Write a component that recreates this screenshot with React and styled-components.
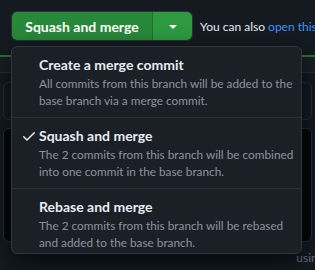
import React from "react";
import styled, { createGlobalStyle } from "styled-components";

const GlobalStyle = createGlobalStyle`
  html, body {
    margin: 0;
    padding: 0;
    background: #151a21;
    font-family: Lato, "Liberation Sans", sans-serif;
    -webkit-font-smoothing: antialiased;
  }
`;

const options = [
  {
    title: "Create a merge commit",
    text: "All commits from this branch will be added to the base branch via a merge commit.",
  },
  {
    title: "Squash and merge",
    text: "The 2 commits from this branch will be combined into one commit in the base branch.",
    selected: true,
  },
  {
    title: "Rebase and merge",
    text: "The 2 commits from this branch will be rebased and added to the base branch.",
  },
];

export default function App() {
  return (
    <Page>
      <GlobalStyle />
      <ActionRow>
        <ButtonGroup>
          <MainButton>Squash and merge</MainButton>
          <CaretButton>
            <svg width="16" height="16" viewBox="0 0 16 16" fill="#ffffff">
              <path d="m4.427 7.427 3.396 3.396a.25.25 0 0 0 .354 0l3.396-3.396A.25.25 0 0 0 11.396 7H4.604a.25.25 0 0 0-.177.427Z" />
            </svg>
          </CaretButton>
        </ButtonGroup>
        <Hint>
          You can also <a href="#">open this in GitHub Desktop</a>
        </Hint>
      </ActionRow>

      <Backdrop>
        <BackdropHeader />
        <BackdropBody>
          <GhostBox />
          <CodeBox />
          <GhostText>using</GhostText>
        </BackdropBody>
      </Backdrop>

      <Menu>
        {options.map((o) => (
          <MenuItem key={o.title}>
            <CheckSlot>
              {o.selected && (
                <svg width="16" height="16" viewBox="0 0 16 16" fill="#e6edf3">
                  <path d="M13.78 4.22a.75.75 0 0 1 0 1.06l-7.25 7.25a.75.75 0 0 1-1.06 0L2.22 9.28a.751.751 0 0 1 .018-1.042.751.751 0 0 1 1.042-.018L6 10.94l6.72-6.72a.75.75 0 0 1 1.06 0Z" />
                </svg>
              )}
            </CheckSlot>
            <ItemBody>
              <ItemTitle>{o.title}</ItemTitle>
              <ItemText>{o.text}</ItemText>
            </ItemBody>
          </MenuItem>
        ))}
      </Menu>
    </Page>
  );
}

const Page = styled.div`
  position: relative;
  width: 315px;
  height: 270px;
  overflow: hidden;
  padding-top: 11px;
  box-sizing: border-box;
`;

const ActionRow = styled.div`
  display: flex;
  align-items: center;
  gap: 7px;
  padding-left: 11px;
  white-space: nowrap;
`;

const ButtonGroup = styled.div`
  display: flex;
  flex-shrink: 0;
  height: 30px;
  border-radius: 6px;
  overflow: hidden;
  border: 1px solid rgba(240, 246, 252, 0.1);
  box-sizing: border-box;
`;

const MainButton = styled.button`
  width: 141px;
  flex-shrink: 0;
  border: 0;
  border-right: 1px solid rgba(0, 0, 0, 0.18);
  background: #28883a;
  color: #ffffff;
  font-family: Lato, "Liberation Sans", sans-serif;
  font-weight: 700;
  font-size: 14px;
  padding: 0;
`;

const CaretButton = styled.button`
  width: 39px;
  flex-shrink: 0;
  border: 0;
  background: #2e9a40;
  display: flex;
  align-items: center;
  justify-content: center;
  padding: 0;
`;

const Hint = styled.span`
  font-size: 12px;
  color: #e6edf3;

  a {
    color: #4493f8;
    text-decoration: none;
  }
`;

const Backdrop = styled.div`
  margin-top: 14px;
  border-top: 2px solid #2a7a35;
`;

const BackdropHeader = styled.div`
  height: 15px;
  background: #1a1f26;
  border-bottom: 1px solid #2a3038;
`;

const BackdropBody = styled.div`
  display: flex;
  flex-direction: column;
  gap: 8px;
  padding: 9px 3px 0 3px;
`;

const GhostBox = styled.div`
  height: 36px;
  border: 1px solid #2a3038;
  border-radius: 6px;
`;

const CodeBox = styled.div`
  height: 112px;
  background: #05070a;
  border: 1px solid #2a3038;
  border-radius: 6px;
`;

const GhostText = styled.div`
  font-size: 12px;
  color: #6e7681;
  text-align: right;
  white-space: nowrap;
  margin-right: -12px;
`;

const Menu = styled.div`
  position: absolute;
  z-index: 1;
  top: 46px;
  left: 11px;
  width: 291px;
  height: 208px;
  box-sizing: border-box;
  background: #1b1f26;
  border: 1px solid #30363d;
  border-radius: 6px;
  box-shadow: 0 8px 24px rgba(1, 4, 9, 0.75);
  display: flex;
  flex-direction: column;
`;

const MenuItem = styled.div`
  display: flex;
  flex: 1;
  padding: 8px 3px 8px 9px;
  border-bottom: 1px solid #2a3038;

  &:last-child {
    border-bottom: 0;
  }
`;

const CheckSlot = styled.div`
  width: 16px;
  flex-shrink: 0;
  margin-right: 2px;
  padding-top: 2px;
`;

const ItemBody = styled.div`
  display: flex;
  flex-direction: column;
`;

const ItemTitle = styled.div`
  font-size: 14px;
  line-height: 20px;
  font-weight: 700;
  color: #e6edf3;
`;

const ItemText = styled.div`
  font-size: 11.8px;
  line-height: 17px;
  color: #8b949e;
`;
